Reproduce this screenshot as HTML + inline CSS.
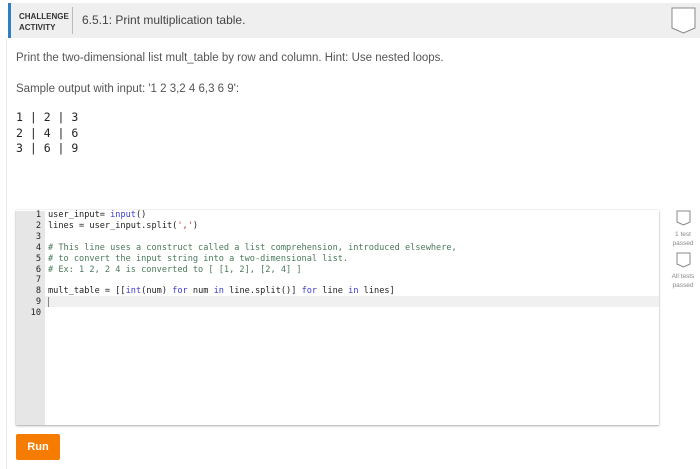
<!DOCTYPE html>
<html><head><style>
body{margin:0;width:700px;height:469px;background:#fff;font-family:"Liberation Sans",sans-serif;position:relative;overflow:hidden}
.abs{position:absolute}
.hdr{left:8px;top:3px;width:692px;height:35px;background:#efefef;border-left:3px solid #2c7fc2}
.code{font-family:"DejaVu Sans Mono","Liberation Mono",monospace;font-size:8.6px;line-height:10.9px;white-space:pre;color:#222}
.gut{left:16px;top:211px;width:29px;height:213px;background:#e6e6e6}
.ln{width:25px;text-align:right}
.c{color:#4a7a5a}.k{color:#3a3ad0}.s{color:#c03030}
</style></head><body>
<div class="abs" style="left:6px;top:38px;width:1px;height:431px;background:#e8e8e8"></div>
<div class="abs hdr"></div>
<div class="abs" style="left:19px;top:11px;font-size:8px;font-weight:bold;color:#333;line-height:11px">CHALLENGE<br>ACTIVITY</div>
<div class="abs" style="left:72px;top:7px;width:1px;height:27px;background:#bbb"></div>
<div class="abs" style="left:82px;top:13px;font-size:12px;color:#444">6.5.1: Print multiplication table.</div>
<svg class="abs" style="left:671px;top:7px" width="25" height="28"><path d="M1 1H24V21L12.5 26L1 21Z" fill="#fff" stroke="#888" stroke-width="1"/></svg>
<div class="abs" style="left:16px;top:52px;font-size:11.5px;color:#555">Print the two-dimensional list mult_table by row and column. Hint: Use nested loops.</div>
<div class="abs" style="left:16px;top:83px;font-size:11.5px;color:#555">Sample output with input: '1 2 3,2 4 6,3 6 9':</div>
<div class="abs" style="left:16px;top:110px;font-family:'DejaVu Sans Mono',monospace;font-size:11.5px;line-height:15.5px;white-space:pre;color:#222">1 | 2 | 3
2 | 4 | 6
3 | 6 | 9</div>
<div class="abs" style="left:16px;top:210px;width:643px;height:215px;background:#fff;box-shadow:0 1px 2px rgba(0,0,0,.3),0 0 1px rgba(0,0,0,.2)"></div>
<div class="abs gut" style="height:214px"></div>
<div class="abs" style="left:45px;top:296px;width:614px;height:11px;background:#f0f0f0"></div>
<div class="abs" style="left:48px;top:297px;width:1px;height:10px;background:#888"></div>
<div class="abs code ln" style="left:16px;top:210px">1
2
3
4
5
6
7
8
9
10</div>
<div class="abs code" style="left:48px;top:210px">user_input= <span class="k">input</span>()
lines = user_input.split(<span class="s">','</span>)

<span class="c"># This line uses a construct called a list comprehension, introduced elsewhere,</span>
<span class="c"># to convert the input string into a two-dimensional list.</span>
<span class="c"># Ex: 1 2, 2 4 is converted to [ [1, 2], [2, 4] ]</span>

mult_table = [[<span class="k">int</span>(num) <span class="k">for</span> num <span class="k">in</span> line.split()] <span class="k">for</span> line <span class="k">in</span> lines]</div>
<svg class="abs" style="left:676px;top:210px" width="15" height="16"><path d="M1 1H14V12L7.5 15L1 12Z" fill="#fff" stroke="#888"/></svg>
<div class="abs" style="left:665px;top:230px;width:36px;text-align:center;font-size:6.5px;color:#888;line-height:9px">1 test<br>passed</div>
<svg class="abs" style="left:676px;top:252px" width="15" height="16"><path d="M1 1H14V12L7.5 15L1 12Z" fill="#fff" stroke="#888"/></svg>
<div class="abs" style="left:665px;top:272px;width:36px;text-align:center;font-size:6.5px;color:#888;line-height:9px">All tests<br>passed</div>
<div class="abs" style="left:16px;top:434px;width:44px;height:26px;background:#f57c00;border-radius:2px;color:#fff;font-size:11px;font-weight:bold;text-align:center;line-height:26px">Run</div>
</body></html>
